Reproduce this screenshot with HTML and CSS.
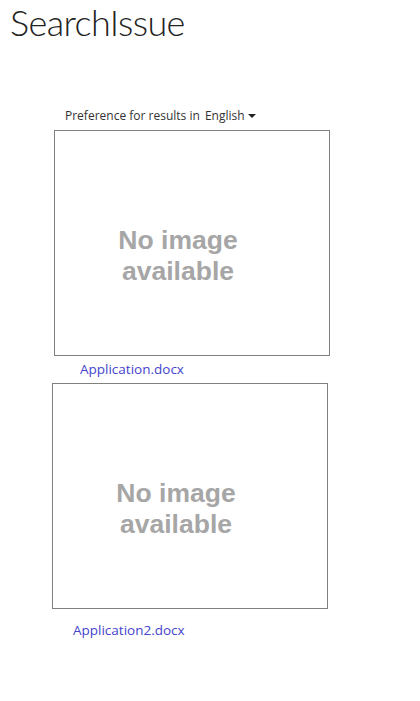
FILE: index.html
```html
<!DOCTYPE html>
<html>
<head>
<meta charset="utf-8">
<link rel="stylesheet" href="styles.css">
</head>
<body>
<h1 class="title">SearchIssue</h1>
<div class="pref">Preference for results in <span class="lang">English<span class="caret"></span></span></div>
<div class="results">
  <div class="result result-first">
    <div class="thumb"><span class="noimg">No image<br>available</span></div>
    <a class="name" href="#">Application.docx</a>
  </div>
  <div class="result result-second">
    <div class="thumb"><span class="noimg">No image<br>available</span></div>
    <a class="name" href="#">Application2.docx</a>
  </div>
</div>
</body>
</html>
```
FILE: styles.css
```css
html, body {
  margin: 0;
  padding: 0;
  background: #fff;
}
body {
  font-family: "Open Sans", "Noto Sans", sans-serif;
  color: #333;
}
.title {
  margin: 0;
  padding: 0 0 0 10px;
  font-family: Lato, "Open Sans", sans-serif;
  font-size: 36px;
  font-weight: 300;
  line-height: 44px;
  color: #222;
  letter-spacing: -0.6px;
}
.pref {
  margin-top: 64px;
  padding-left: 65px;
  font-size: 12px;
  line-height: 16px;
  color: #333;
}
.lang {
  margin-left: 2px;
}
.caret {
  display: inline-block;
  width: 0;
  height: 0;
  margin-left: 3px;
  vertical-align: 2px;
  border-left: 4px solid transparent;
  border-right: 4px solid transparent;
  border-top: 4px solid #222;
}
.results {
  display: flex;
  flex-direction: column;
  padding-top: 6px;
}
.result {
  display: flex;
  flex-direction: column;
}
.result-first {
  padding-left: 54px;
}
.result-second {
  padding-left: 52px;
  margin-top: 5px;
}
.thumb {
  border: 1px solid #808080;
  display: flex;
  align-items: center;
  justify-content: center;
  padding: 26px 28px 0 0;
  box-sizing: border-box;
  height: 226px;
  width: 276px;
}
.noimg {
  font-family: "Liberation Sans", Arial, sans-serif;
  font-weight: bold;
  font-size: 26.5px;
  line-height: 31px;
  color: #a6a6a6;
  text-align: center;
}
.name {
  font-size: 13.5px;
  line-height: 18px;
  color: #4444cc;
  text-decoration: none;
  align-self: flex-start;
}
.result-first .name {
  margin: 4px 0 0 26px;
}
.result-second .name {
  margin: 12px 0 0 21px;
}
```
